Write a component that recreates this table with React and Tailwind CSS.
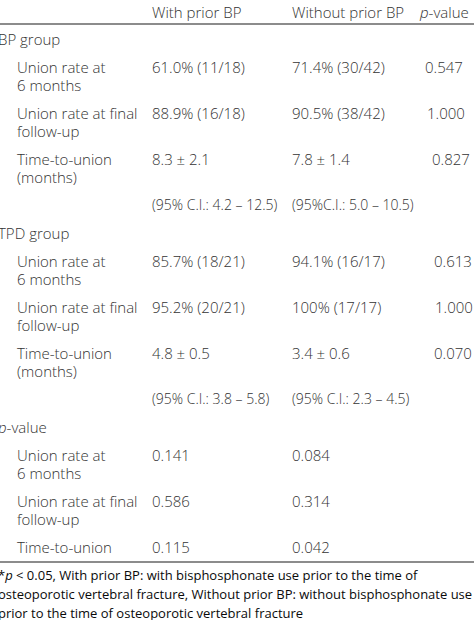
const sections = [
  {
    title: 'BP group',
    italic: false,
    rows: [
      { label: ['Union rate at', '6 months'], a: '61.0% (11/18)', b: '71.4% (30/42)', p: '0.547', pad: 'pl-[5px]' },
      { label: ['Union rate at final', 'follow-up'], a: '88.9% (16/18)', b: '90.5% (38/42)', p: '1.000', pad: 'pl-[7px]' },
      { label: ['Time-to-union', '(months)'], a: '8.3 ± 2.1', b: '7.8 ± 1.4', p: '0.827', pad: 'pl-[12px]' },
      { label: [], a: '(95% C.I.: 4.2 – 12.5)', b: '(95%C.I.: 5.0 – 10.5)', p: '', pad: '', ci: true },
    ],
  },
  {
    title: 'TPD group',
    italic: false,
    rows: [
      { label: ['Union rate at', '6 months'], a: '85.7% (18/21)', b: '94.1% (16/17)', p: '0.613', pad: 'pl-[14px]' },
      { label: ['Union rate at final', 'follow-up'], a: '95.2% (20/21)', b: '100% (17/17)', p: '1.000', pad: 'pl-[15px]' },
      { label: ['Time-to-union', '(months)'], a: '4.8 ± 0.5', b: '3.4 ± 0.6', p: '0.070', pad: 'pl-[14px]' },
      { label: [], a: '(95% C.I.: 3.8 – 5.8)', b: '(95% C.I.: 2.3 – 4.5)', p: '', pad: '', ci: true },
    ],
  },
  {
    title: 'p-value',
    italic: true,
    rows: [
      { label: ['Union rate at', '6 months'], a: '0.141', b: '0.084', p: '', pad: '' },
      { label: ['Union rate at final', 'follow-up'], a: '0.586', b: '0.314', p: '', pad: '' },
      { label: ['Time-to-union'], a: '0.115', b: '0.042', p: '', pad: '' },
    ],
  },
];

function Row({ row }) {
  // the C.I. lines are set a touch narrower in the reference
  const cell = row.ci ? 'whitespace-nowrap text-[14px]' : 'whitespace-nowrap';
  return (
    <div className="grid grid-cols-[154px_140px_128px_1fr] py-[5px]">
      <div className="pl-[19px] whitespace-nowrap">
        {row.label.map((l) => (
          <div key={l}>{l}</div>
        ))}
      </div>
      <div className={cell}>{row.a}</div>
      <div className={cell}>{row.b}</div>
      <div className={row.pad}>{row.p}</div>
    </div>
  );
}

export default function App() {
  return (
    <div className="w-[474px] h-[620px] overflow-hidden bg-white">
      <div
        className="ml-[-2px] w-[490px] text-[15px] leading-[18px] font-light text-[#333]"
        style={{ fontFamily: '"Open Sans", "Noto Sans", sans-serif' }}
      >
        <div className="grid grid-cols-[154px_140px_128px_1fr] pt-[3px] pb-[2px] border-b-2 border-[#8c8c8c]">
          <div></div>
          <div>With prior BP</div>
          <div>Without prior BP</div>
          <div className="whitespace-nowrap">
            <span className="italic">p</span>-value
          </div>
        </div>

        {sections.map((s) => (
          <div key={s.title}>
            <div className="py-[5px]">
              {s.italic ? (
                <>
                  <span className="italic">p</span>-value
                </>
              ) : (
                s.title
              )}
            </div>
            {s.rows.map((r, i) => (
              <Row key={i} row={r} />
            ))}
          </div>
        ))}

        <div className="border-t-2 border-[#8c8c8c] pt-[3px] text-[13px] leading-[19px] font-normal text-[#0a0a0a] whitespace-nowrap">
          *<span className="italic">p</span> &lt; 0.05, With prior BP: with bisphosphonate use prior to the time of
          <br />
          osteoporotic vertebral fracture, Without prior BP: without bisphosphonate use
          <br />
          prior to the time of osteoporotic vertebral fracture
        </div>
      </div>
    </div>
  );
}
